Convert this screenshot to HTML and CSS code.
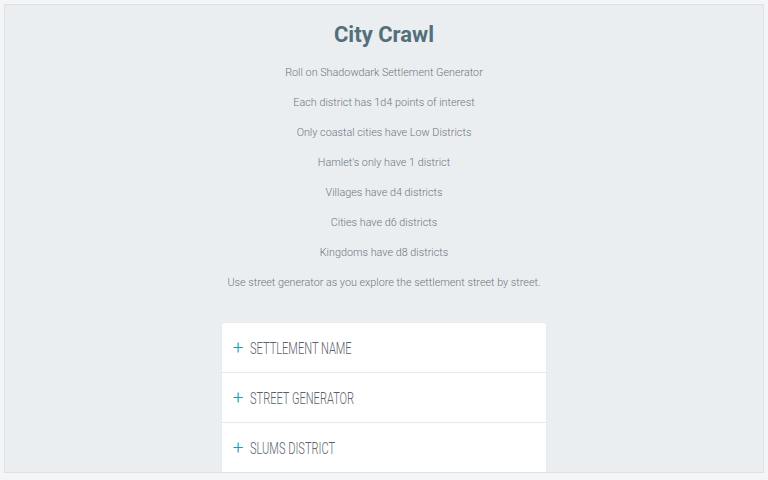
FILE: index.html
```html
<!DOCTYPE html>
<html lang="en">
<head>
  <meta charset="UTF-8">
  <meta name="viewport" content="width=device-width, initial-scale=1">
  <title>City Crawl</title>
  <link rel="stylesheet" href="styles.css">
</head>
<body>

<div class="page">
  <h1 class="title">City Crawl</h1>

  <!-- Rules -->
  <div class="notes">
    <p>Roll on Shadowdark Settlement Generator</p>
    <p>Each district has 1d4 points of interest</p>
    <p>Only coastal cities have Low Districts</p>
    <p>Hamlet's only have 1 district</p>
    <p>Villages have d4 districts</p>
    <p>Cities have d6 districts</p>
    <p>Kingdoms have d8 districts</p>
    <p>Use street generator as you explore the settlement street by street.</p>
  </div>

  <!-- Tables -->
  <div class="accordion">
    <div class="acc-row"><span class="acc-plus">+</span><span class="acc-label">SETTLEMENT NAME</span></div>
    <div class="acc-row"><span class="acc-plus">+</span><span class="acc-label">STREET GENERATOR</span></div>
    <div class="acc-row"><span class="acc-plus">+</span><span class="acc-label">SLUMS DISTRICT</span></div>
  </div>
</div>

</body>
</html>
```

FILE: styles.css
```css
body {
  margin: 0;
  font-family: 'Roboto', sans-serif;
  background-color: #f4f5f6;
}
.page {
  margin: 4px;
  height: 469px;
  overflow: hidden;
  background-color: #eaeef1;
  border: 1px solid #dde1e5;
  box-sizing: border-box;
  padding-top: 15px;
}
.title {
  margin: 0;
  text-align: center;
  font-size: 22px;
  line-height: 30px;
  font-weight: 700;
  color: #546e7a;
}
.notes {
  margin-top: 15px;
  display: flex;
  flex-direction: column;
  gap: 14px;
  align-items: center;
}
.notes p {
  margin: 0;
  font-size: 10.8px;
  line-height: 16px;
  font-weight: 300;
  color: #6f767d;
}
.accordion {
  width: 324px;
  margin: 32px auto 0;
  background: white;
  border-radius: 3px 3px 0 0;
  box-shadow: 0 0 2px rgba(0,0,0,0.06);
}
.acc-row {
  height: 49px;
  border-bottom: 1px solid #e6e8ea;
  display: flex;
  align-items: center;
  padding-left: 10px;
  gap: 6px;
}
.acc-plus {
  color: #1f9bb0;
  font-size: 19px;
  font-weight: 300;
  width: 12px;
  text-align: center;
}
.acc-label {
  font-family: 'Roboto', sans-serif;
  font-size: 17px;
  font-weight: 300;
  color: #59636c;
  display: inline-block;
  transform: scaleX(0.65);
  transform-origin: left center;
}
```
